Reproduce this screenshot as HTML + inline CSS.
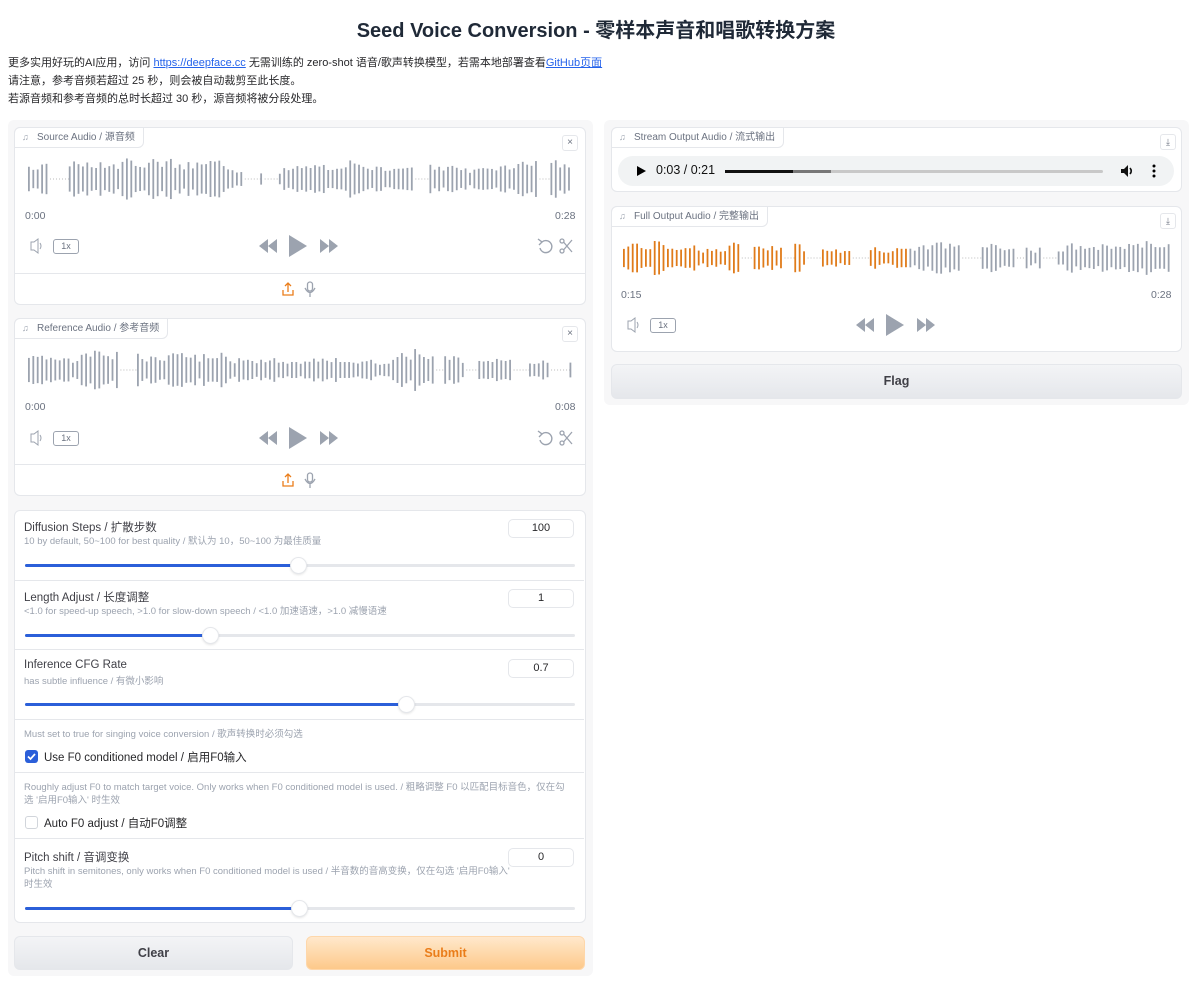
<!DOCTYPE html>
<html><head><meta charset="utf-8">
<style>
*{box-sizing:border-box;margin:0;padding:0}
body{width:1192px;height:989px;background:#fff;font-family:"Liberation Sans","Noto Sans CJK SC",sans-serif;color:#27272a;position:relative;overflow:hidden}
.abs{position:absolute}
h1{position:absolute;top:14px;left:0;width:1192px;text-align:center;font-size:20px;font-weight:600;color:#1f2937}
.intro{position:absolute;left:8px;top:54px;font-size:11px;line-height:18px;color:#27272a}
.intro a{color:#2563eb;text-decoration:underline}
.col{position:absolute;background:#f7f7f8;border-radius:6px}
.blk{position:absolute;background:#fff;border:1px solid #e5e7eb;border-radius:6px}
.tab{position:absolute;left:-1px;top:-1px;height:21px;padding:0 8px 0 22px;border:1px solid #e5e7eb;border-radius:6px 0 6px 0;font-size:10px;line-height:19px;color:#6b7280;background:#fff}
.tab:before{content:"♫";position:absolute;left:7px;font-size:9px;color:#9ca3af}
.xbtn{position:absolute;width:16px;height:16px;border:1px solid #e5e7eb;border-radius:3px;font-size:10px;line-height:14px;text-align:center;color:#6b7280}
.time{position:absolute;font-size:10.5px;color:#6b7280}
.rate{position:absolute;width:26px;height:15px;border:1px solid #9ca3af;border-radius:3px;font-size:9px;line-height:13px;text-align:center;color:#6b7280}
.lbl{position:absolute;left:24px;font-size:11.5px;color:#3f3f46}
.desc{position:absolute;left:24px;font-size:9.5px;color:#9ca3af;line-height:13px}
.num{position:absolute;left:508px;width:66px;height:19px;border:1px solid #e5e7eb;border-radius:5px;font-size:11px;line-height:17px;text-align:center;color:#27272a}
.trk{position:absolute;left:25px;width:550px;height:3px;background:#e5e7eb;border-radius:2px}
.trk i{position:absolute;left:0;top:0;height:3px;background:#2b5fd9;border-radius:2px}
.trk b{position:absolute;top:-7px;width:17px;height:17px;border-radius:50%;background:#fff;border:1px solid #e5e7eb;box-shadow:0 1px 2px rgba(0,0,0,.1)}
.hr{position:absolute;left:15px;width:569px;height:1px;background:#e5e7eb}
.ihr{position:absolute;left:0;width:570px;height:1px;background:#e5e7eb;top:145px}
.btn{position:absolute;border-radius:6px;font-size:12.5px;font-weight:600;text-align:center;line-height:33px}
</style></head><body>
<h1>Seed Voice Conversion - 零样本声音和唱歌转换方案</h1>
<div class="intro">更多实用好玩的AI应用，访问 <a>https://deepface.cc</a> 无需训练的 zero-shot 语音/歌声转换模型，若需本地部署查看<a>GitHub页面</a><br>请注意，参考音频若超过 25 秒，则会被自动裁剪至此长度。<br>若源音频和参考音频的总时长超过 30 秒，源音频将被分段处理。</div>

<div class="col" style="left:8px;top:120px;width:585px;height:856px"></div>
<div class="col" style="left:604px;top:120px;width:585px;height:285px"></div>

<div class="blk" style="left:14px;top:127px;width:572px;height:178px">
 <div class="tab">Source Audio / 源音频</div>
 <div class="xbtn" style="left:547px;top:7px">×</div>
 <svg class="abs wave" data-seed="3" data-col="#9ca3af" style="left:10px;top:28px" width="550" height="46"></svg>
 <div class="time" style="left:10px;top:82px">0:00</div><div class="time" style="left:540px;top:82px">0:28</div>
 <div class="ihr"></div>
</div>
<div class="blk" style="left:14px;top:318px;width:572px;height:178px">
 <div class="tab">Reference Audio / 参考音频</div>
 <div class="xbtn" style="left:547px;top:7px">×</div>
 <svg class="abs wave" data-seed="11" data-col="#9ca3af" style="left:10px;top:28px" width="550" height="46"></svg>
 <div class="time" style="left:10px;top:82px">0:00</div><div class="time" style="left:540px;top:82px">0:08</div>
 <div class="ihr"></div>
</div>

<div class="blk" style="left:611px;top:127px;width:571px;height:65px">
 <div class="tab">Stream Output Audio / 流式输出</div>
 <div class="xbtn" style="left:548px;top:6px;font-size:9px">⤓</div>
 <div class="abs" style="left:6px;top:28px;width:556px;height:30px;background:#f1f3f4;border-radius:15px">
  <svg class="abs" style="left:17px;top:9px" width="12" height="12"><path d="M2 1L11 6L2 11Z" fill="#000"/></svg>
  <div class="abs" style="left:38px;top:7px;font-size:12.5px;color:#111">0:03 / 0:21</div>
  <div class="abs" style="left:107px;top:14px;width:378px;height:3px;background:#c8c8c8;border-radius:2px"><div style="width:106px;height:3px;background:#777"></div><div class="abs" style="left:0;top:0;width:68px;height:3px;background:#111"></div></div>
  <svg class="abs" style="left:502px;top:8px" width="14" height="14"><path d="M1 5H4L8 1V13L4 9H1Z" fill="#111"/><path d="M10 4Q12.5 7 10 10" stroke="#111" stroke-width="1.6" fill="none"/></svg>
  <svg class="abs" style="left:533px;top:8px" width="6" height="14"><circle cx="3" cy="2" r="1.5"/><circle cx="3" cy="7" r="1.5"/><circle cx="3" cy="12" r="1.5"/></svg>
 </div>
</div>
<div class="blk" style="left:611px;top:206px;width:571px;height:146px">
 <div class="tab">Full Output Audio / 完整输出</div>
 <div class="xbtn" style="left:548px;top:6px;font-size:9px">⤓</div>
 <svg class="abs wave" data-seed="7" data-col="#9ca3af" data-prog="0.52" style="left:8px;top:28px" width="552" height="46"></svg>
 <div class="time" style="left:9px;top:82px">0:15</div><div class="time" style="left:539px;top:82px">0:28</div>
</div>
<div class="btn" style="left:611px;top:364px;width:571px;height:35px;background:linear-gradient(#f3f4f6,#e5e7eb);color:#3f3f46;border:1px solid #e5e7eb">Flag</div>

<div class="blk" style="left:14px;top:510px;width:572px;height:413px"></div>
<div class="lbl" style="top:519px">Diffusion Steps / 扩散步数</div>
<div class="desc" style="top:535px">10 by default, 50~100 for best quality / 默认为 10，50~100 为最佳质量</div>
<div class="num" style="top:519px">100</div>
<div class="trk" style="top:564px"><i style="width:273px"></i><b style="left:265px"></b></div>
<div class="hr" style="top:580px"></div>
<div class="lbl" style="top:589px">Length Adjust / 长度调整</div>
<div class="desc" style="top:605px">&lt;1.0 for speed-up speech, &gt;1.0 for slow-down speech / &lt;1.0 加速语速，&gt;1.0 减慢语速</div>
<div class="num" style="top:589px">1</div>
<div class="trk" style="top:634px"><i style="width:185px"></i><b style="left:177px"></b></div>
<div class="hr" style="top:649px"></div>
<div class="lbl" style="top:659px">Inference CFG Rate</div>
<div class="desc" style="top:675px">has subtle influence / 有微小影响</div>
<div class="num" style="top:659px">0.7</div>
<div class="trk" style="top:703px"><i style="width:381px"></i><b style="left:373px"></b></div>
<div class="hr" style="top:719px"></div>
<div class="desc" style="top:728px">Must set to true for singing voice conversion / 歌声转换时必须勾选</div>
<div class="abs" style="left:25px;top:750px;width:13px;height:13px;background:#2b5fd9;border-radius:3px"><svg width="13" height="13" style="position:absolute"><path d="M3 6.5L5.5 9L10 4" stroke="#fff" stroke-width="1.7" fill="none"/></svg></div>
<div class="lbl" style="left:44px;top:749px;color:#27272a">Use F0 conditioned model / 启用F0输入</div>
<div class="hr" style="top:772px"></div>
<div class="desc" style="top:781px;width:550px">Roughly adjust F0 to match target voice. Only works when F0 conditioned model is used. / 粗略调整 F0 以匹配目标音色，仅在勾选 '启用F0输入' 时生效</div>
<div class="abs" style="left:25px;top:816px;width:13px;height:13px;border:1px solid #d1d5db;border-radius:3px;background:#fff"></div>
<div class="lbl" style="left:44px;top:815px;color:#27272a">Auto F0 adjust / 自动F0调整</div>
<div class="hr" style="top:838px"></div>
<div class="lbl" style="top:849px">Pitch shift / 音调变换</div>
<div class="desc" style="top:865px;width:490px">Pitch shift in semitones, only works when F0 conditioned model is used / 半音数的音高变换，仅在勾选 '启用F0输入' 时生效</div>
<div class="num" style="top:848px">0</div>
<div class="trk" style="top:907px"><i style="width:274px"></i><b style="left:266px"></b></div>

<div class="btn" style="left:14px;top:936px;width:279px;height:34px;background:linear-gradient(#f3f4f6,#e5e7eb);color:#3f3f46;border:1px solid #e5e7eb">Clear</div>
<div class="btn" style="left:306px;top:936px;width:279px;height:34px;background:linear-gradient(#ffe8cc,#fdc98a);color:#ea7d1a;border:1px solid #fed7aa">Submit</div>

<svg width="1192" height="989" class="abs" style="left:0;top:0;pointer-events:none" fill="#9ca3af">
<defs>
<g id="ctl">
 <path d="M0 -4H3L7 -7V7L3 4H0Z" fill="none" stroke="#9ca3af" stroke-width="1"/><path d="M9 -3Q11 0 9 3" fill="none" stroke="#9ca3af"/>
</g>
<g id="mid">
 <path d="M0 0L9 -7V7Z M9 0L18 -7V7Z"/>
 <path d="M30 -11L48 0L30 11Z"/>
 <path d="M61 -7L70 0L61 7Z M70 -7L79 0L70 7Z"/>
</g>
<g id="right">
 <path d="M4 -4A6 6 0 1 1 2 2" fill="none" stroke="#9ca3af" stroke-width="1.4"/><path d="M0 -7L4 -4L1 -1" fill="none" stroke="#9ca3af" stroke-width="1.4"/>
 <g transform="translate(22,0)" fill="none" stroke="#9ca3af" stroke-width="1.3"><circle cx="2" cy="-5" r="2"/><circle cx="2" cy="5" r="2"/><path d="M3.5 -4L12 6M3.5 4L12 -6"/></g>
</g>
</defs>
<use href="#ctl" x="31" y="246"/>
<use href="#mid" x="259" y="246"/><use href="#right" x="538" y="246"/>
<use href="#ctl" x="31" y="438"/><use href="#mid" x="259" y="438"/><use href="#right" x="538" y="438"/>
<use href="#ctl" x="628" y="325"/><use href="#mid" x="856" y="325"/>
<g fill="none" stroke-width="1.3">
 <path d="M283 290V295H293V290M288 292V283M285 286L288 283L291 286" stroke="#ea7d1a"/>
 <path d="M283 481V486H293V481M288 483V474M285 477L288 474L291 477" stroke="#ea7d1a"/>
 <g stroke="#9ca3af"><rect x="307.5" y="282" width="5" height="9" rx="2.5"/><path d="M305 288Q310 297 315 288M310 293V297"/></g>
 <g stroke="#9ca3af"><rect x="307.5" y="473" width="5" height="9" rx="2.5"/><path d="M305 479Q310 488 315 479M310 484V488"/></g>
</g>
</svg>
<div class="rate" style="left:53px;top:239px">1x</div>
<div class="rate" style="left:53px;top:431px">1x</div>
<div class="rate" style="left:650px;top:318px">1x</div>

<script>
document.querySelectorAll('svg.wave').forEach(function(s){
 var seed=+s.dataset.seed, w=+s.getAttribute('width'), h=+s.getAttribute('height'), prog=+(s.dataset.prog||0);
 function r(){seed=(seed*9301+49297)%233280;return seed/233280;}
 var out='', mid=h/2, x=3, env=0.7;
 while(x<w-4){
  if(r()<0.05){
   var g=8+r()*12; for(var gx=x;gx<x+g&&gx<w;gx+=3) out+='<rect x="'+gx+'" y="'+(mid-0.5)+'" width="1" height="1" fill="#bbb"/>'; x+=g; continue;}
  env=Math.min(1,Math.max(0.45,env+(r()-0.5)*0.35));
  var bh=Math.max(6,(h-4)*env*(0.55+r()*0.45));
  var c=(prog&&x<w*prog)?'#e07b1a':s.dataset.col;
  out+='<rect x="'+x+'" y="'+(mid-bh/2)+'" width="1.8" height="'+bh+'" fill="'+c+'"/>';
  x+=4.4;
 }
 s.innerHTML=out;
});
</script>
</body></html>
